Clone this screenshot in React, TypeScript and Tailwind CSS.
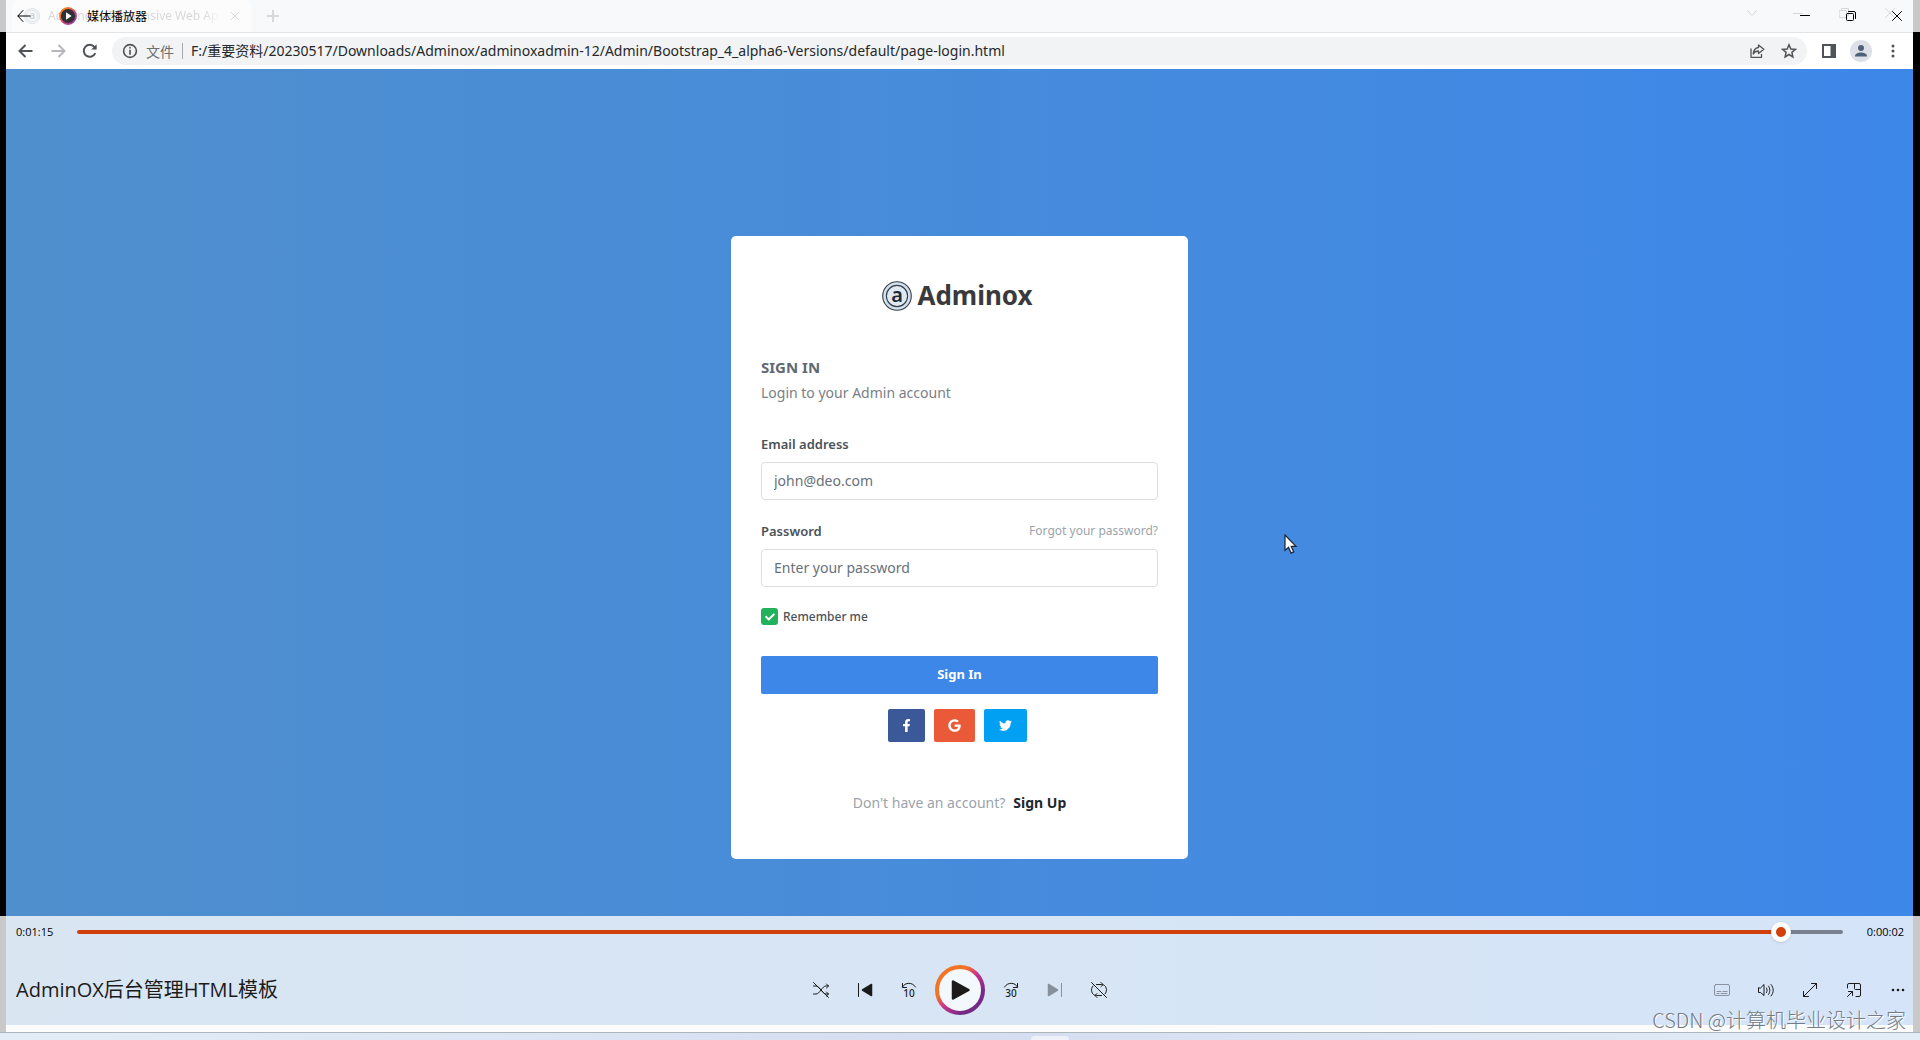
import type { ReactNode } from 'react'
import { FaCheck, FaFacebookF, FaGoogle, FaTwitter } from 'react-icons/fa'

interface IconProps {
  size?: number
  stroke?: number
  className?: string
  children: ReactNode
}

const Icon = ({ size = 16, stroke = 1, className, children }: IconProps) => {
  return (
    <svg
      width={size}
      height={size}
      viewBox={`0 0 ${size} ${size}`}
      fill="none"
      stroke="currentColor"
      strokeWidth={stroke}
      strokeLinecap="round"
      strokeLinejoin="round"
      className={className}
      aria-hidden="true"
    >
      {children}
    </svg>
  )
}

interface IconButtonProps {
  label: string
  className: string
  disabled?: boolean
  children: ReactNode
}

const IconButton = ({ label, className, disabled, children }: IconButtonProps) => {
  return (
    <button
      type="button"
      aria-label={label}
      disabled={disabled}
      className={'flex shrink-0 items-center justify-center ' + className}
    >
      {children}
    </button>
  )
}

const BrandMark = ({ size }: { size: number }) => {
  return (
    <svg width={size} height={size} viewBox="0 0 30 30" aria-hidden="true">
      <circle cx="15" cy="15" r="14.3" fill="#d3dfe9" stroke="#33414d" strokeWidth="1.1" />
      <circle cx="15" cy="15" r="10.6" fill="#dfe9f2" stroke="#33414d" strokeWidth="1.1" />
      <text
        x="15"
        y="20.5"
        textAnchor="middle"
        fontFamily="Noto Sans, sans-serif"
        fontSize="20"
        fontWeight="600"
        fill="#1f2a35"
      >
        a
      </text>
    </svg>
  )
}

const TabStrip = () => {
  return (
    <div className="flex h-8 items-center bg-[#ebf0fa] pl-1.5 text-[#4b4b4b]">
      <div className="flex h-8 w-[239px] items-center rounded-t-lg bg-white pr-2 pl-3">
        <BrandMark size={16} />
        <span className="mr-1.5 ml-2 flex-1 overflow-hidden mask-r-from-90% font-['Noto_Sans',sans-serif] text-xs whitespace-nowrap">
          Adminox - Responsive Web App
        </span>
        <IconButton label="Close tab" className="size-4">
          <Icon size={10}>
            <path d="M1.5 1.5l7 7M8.5 1.5l-7 7" />
          </Icon>
        </IconButton>
      </div>
      <IconButton label="New tab" className="ml-3.5 size-4">
        <Icon size={12} stroke={2}>
          <path d="M6 .5v11M.5 6h11" />
        </Icon>
      </IconButton>
      <div className="mb-1.5 ml-auto flex">
        <IconButton label="Search tabs" className="h-6 w-[46px]">
          <Icon size={10}>
            <path d="M.5 2.5L5 7.5l4.5-5" />
          </Icon>
        </IconButton>
        <IconButton label="Minimize browser" className="h-6 w-[46px]">
          <Icon size={10}>
            <path d="M0 5.5h10" />
          </Icon>
        </IconButton>
        <IconButton label="Restore browser" className="h-6 w-[46px]">
          <Icon size={10}>
            <path d="M.5 2.5h7v7h-7zM2.5 2.5v-2h7v7h-2" />
          </Icon>
        </IconButton>
        <IconButton label="Close browser" className="h-6 w-[46px]">
          <Icon size={10}>
            <path d="M.5.5l9 9M9.5.5l-9 9" />
          </Icon>
        </IconButton>
      </div>
    </div>
  )
}

const AddressBar = () => {
  return (
    <div className="flex h-[37px] items-center border-t border-[#e1e3e6] bg-white px-1 text-[#505357]">
      <IconButton label="Back" className="size-8">
        <Icon stroke={2}>
          <path d="M14.5 8h-13M7.5 2l-6 6 6 6" strokeLinecap="butt" strokeLinejoin="miter" />
        </Icon>
      </IconButton>
      <IconButton label="Forward" className="size-8 text-[#b5b7ba]" disabled>
        <Icon stroke={2}>
          <path d="M1.5 8h13M8.5 2l6 6-6 6" strokeLinecap="butt" strokeLinejoin="miter" />
        </Icon>
      </IconButton>
      <IconButton label="Reload" className="size-8">
        <Icon stroke={2}>
          <path d="M13.3 10.2A6 6 0 1 1 12.4 4L14 5.7" strokeLinecap="butt" />
          <path d="M14.6 1.2v5.4H9.2z" fill="currentColor" stroke="none" />
        </Icon>
      </IconButton>
      <div className="ml-1.5 flex h-7 flex-1 items-center rounded-full bg-[#f1f3f4] px-2.5">
        <Icon stroke={1.6} className="shrink-0">
          <circle cx="8" cy="8" r="6.4" />
          <path d="M8 7.2v4M8 4.6v.4" />
        </Icon>
        <span className="ml-2 shrink-0 border-r border-[#a6a9ad] pr-2 font-['Noto_Sans_CJK_SC',sans-serif] text-sm leading-4 text-[#6b6e72]">
          文件
        </span>
        <input
          type="text"
          aria-label="Address"
          defaultValue="F:/重要资料/20230517/Downloads/Adminox/adminoxadmin-12/Admin/Bootstrap_4_alpha6-Versions/default/page-login.html"
          className="ml-2 min-w-0 flex-1 bg-transparent font-['Noto_Sans','Noto_Sans_CJK_SC',sans-serif] text-sm text-[#26282b] outline-none"
        />
        <IconButton label="Share" className="size-8">
          <Icon stroke={1.3}>
            <path d="M2 6v8.3h10.500v-3" />
            <path d="M9.500 2l5.300 4.300-5.300 4.200V8C6.800 8 5.200 9 4.200 11c.2-3.500 2-6 5.300-6.500z" />
          </Icon>
        </IconButton>
        <IconButton label="Bookmark" className="-mr-2 size-8">
          <Icon stroke={1.5}>
            <path
              d="M8 1.800l1.800 4.200 4.600.4-3.500 3 1 4.500L8 11.500l-3.900 2.400 1-4.500-3.500-3 4.600-.4z"
              strokeLinejoin="miter"
            />
          </Icon>
        </IconButton>
      </div>
      <IconButton label="Side panel" className="ml-1.5 size-8">
        <Icon stroke={2}>
          <path d="M2 2h12v12H2z" strokeLinejoin="miter" />
          <path d="M9.500 2H14v12H9.500z" fill="currentColor" stroke="none" />
        </Icon>
      </IconButton>
      <IconButton label="Profile" className="size-8">
        <span className="flex size-[22px] items-center justify-center rounded-full bg-[#dde1e7] text-[#4f6079]">
          <Icon size={14}>
            <circle cx="7" cy="4" r="3" fill="currentColor" stroke="none" />
            <path d="M1 12.500c0-3 3-4 6-4s6 1 6 4z" fill="currentColor" stroke="none" />
          </Icon>
        </span>
      </IconButton>
      <IconButton label="Menu" className="size-8">
        <Icon>
          <g fill="currentColor" stroke="none">
            <circle cx="8" cy="3" r="1.500" />
            <circle cx="8" cy="8" r="1.500" />
            <circle cx="8" cy="13" r="1.500" />
          </g>
        </Icon>
      </IconButton>
    </div>
  )
}

const inputClass =
  'mt-2 h-[38px] w-full rounded border border-[#dcdee0] px-3 text-sm text-[#565e66] outline-none placeholder:text-[#68717a]'
const labelClass = 'text-[13px] leading-5 font-semibold text-[#4c5258]'

const LoginCard = () => {
  return (
    <section className="w-[457px] rounded-[5px] bg-white px-[30px] pt-[45px] pb-11 font-['Noto_Sans',sans-serif]">
      <h1 className="flex h-[30px] items-center justify-center gap-[5px] pr-1 text-[26px] font-bold text-[#3a3a3c]">
        <BrandMark size={30} />
        Adminox
      </h1>
      <h2 className="mt-11 text-[15px] leading-6 font-bold text-[#5f6973]">SIGN IN</h2>
      <p className="mt-0.5 text-sm leading-6 text-[#7b8085]">Login to your Admin account</p>

      <form onSubmit={(e) => e.preventDefault()}>
        <div className="mt-[29px]">
          <label htmlFor="email" className={'block ' + labelClass}>
            Email address
          </label>
          <input id="email" type="email" placeholder="john@deo.com" className={inputClass} />
        </div>
        <div className="mt-[21px]">
          <div className="flex items-center justify-between">
            <label htmlFor="password" className={labelClass}>
              Password
            </label>
            <a href="#forgot" className="text-xs leading-5 text-[#9ba3ab]">
              Forgot your password?
            </a>
          </div>
          <input
            id="password"
            type="password"
            placeholder="Enter your password"
            className={inputClass}
          />
        </div>
        <div className="mt-5 flex h-5 items-center gap-[5px]">
          <span className="relative flex size-[17px]">
            <input
              id="remember"
              type="checkbox"
              defaultChecked
              className="size-[17px] appearance-none rounded-[3px] bg-[#22b25c]"
            />
            <FaCheck className="pointer-events-none absolute top-1 left-1 size-2.5 text-white" />
          </span>
          <label htmlFor="remember" className="text-xs leading-5 font-medium text-[#4c5258]">
            Remember me
          </label>
        </div>
        <button
          type="submit"
          className="mt-[29px] block h-[38px] w-full rounded-[2px] bg-[#3d87e9] text-[13px] font-bold text-white"
        >
          Sign In
        </button>
      </form>

      <div className="mt-[15px] flex justify-center gap-1 text-sm text-white">
        <button
          type="button"
          aria-label="Facebook"
          className="mr-[5px] flex h-[33px] w-[37px] items-center justify-center rounded-[2px] bg-[#3b5998]"
        >
          <FaFacebookF size={13} />
        </button>
        <button
          type="button"
          aria-label="Google"
          className="mr-[5px] flex h-[33px] w-[41px] items-center justify-center rounded-[2px] bg-[#eb5a38]"
        >
          <FaGoogle size={13} />
        </button>
        <button
          type="button"
          aria-label="Twitter"
          className="mr-[5px] flex h-[33px] w-[43px] items-center justify-center rounded-[2px] bg-[#01a0f3]"
        >
          <FaTwitter size={13} />
        </button>
      </div>

      <p className="mt-[49px] text-center text-sm leading-6 text-[#9ba3ab]">
        Don't have an account?
        <a href="#signup" className="ml-2 font-bold text-[#20272e]">
          Sign Up
        </a>
      </p>
    </section>
  )
}

const PlayerTitleBar = () => {
  return (
    <header className="absolute inset-x-0 top-0 flex h-8 items-center bg-[#fbfbfb]/80 text-black">
      <IconButton label="返回" className="w-12">
        <Icon size={14}>
          <path d="M13 7H1M6 1.500L.8 7 6 12.500" />
        </Icon>
      </IconButton>
      <svg width="18" height="18" viewBox="0 0 18 18" className="ml-[11px]" aria-hidden="true">
        <defs>
          <linearGradient id="appRing" x1="0" y1="0" x2="1" y2="1">
            <stop offset="0.2" stopColor="#f47b20" />
            <stop offset="0.6" stopColor="#d0407a" />
            <stop offset="1" stopColor="#7a3fb0" />
          </linearGradient>
        </defs>
        <circle cx="9" cy="9" r="8" fill="#303036" stroke="url(#appRing)" strokeWidth="1.800" />
        <path d="M7 5.300v7.400L12.600 9z" fill="#fff" />
      </svg>
      <span className="ml-2.5 font-['Noto_Sans_CJK_SC',sans-serif] text-xs">媒体播放器</span>
      <div className="ml-auto flex">
        <IconButton label="最小化" className="h-8 w-[46px]">
          <Icon size={10}>
            <path d="M0 4.500h10" />
          </Icon>
        </IconButton>
        <IconButton label="还原" className="h-8 w-[46px]">
          <Icon size={10}>
            <rect x=".5" y="2.500" width="7" height="7" rx="1" />
            <path d="M2.500.5H8A1.500 1.500 0 0 1 9.500 2v5.500" />
          </Icon>
        </IconButton>
        <IconButton label="关闭" className="h-8 w-[46px]">
          <Icon size={10}>
            <path d="M.5.5l9 9M9.500.5l-9 9" />
          </Icon>
        </IconButton>
      </div>
    </header>
  )
}

const SkipIcon = ({ seconds, back }: { seconds: number; back?: boolean }) => {
  return (
    <Icon size={24}>
      {back ? (
        <path d="M5.500 5.500v4H9.500M5.500 9C8 4 15.500 4 18.500 9" />
      ) : (
        <path d="M18.500 5.500v4H14.500M18.500 9C16 4 8.500 4 5.500 9" />
      )}
      <text
        x="12"
        y="19"
        textAnchor="middle"
        fontFamily="Noto Sans, sans-serif"
        fontSize="10"
        fontWeight="500"
        fill="currentColor"
        stroke="none"
      >
        {seconds}
      </text>
    </Icon>
  )
}

const PlayerControls = () => {
  return (
    <footer className="absolute inset-x-0 bottom-2 h-[116px] bg-[#fbfbfb]/80 font-['Open_Sans','Noto_Sans_CJK_SC',sans-serif] text-[#1b1b1b]">
      <div className="flex h-8 items-center px-4 text-[11px] text-black">
        <span className="w-[61px]">0:01:15</span>
        <input
          type="range"
          aria-label="进度"
          min={0}
          max={1000}
          defaultValue={970}
          className="h-1 min-w-0 flex-1 appearance-none rounded-full bg-linear-to-r from-[#d13f0a] from-[96.5%] to-[#788090] to-[96.5%] [&::-webkit-slider-thumb]:size-5 [&::-webkit-slider-thumb]:appearance-none [&::-webkit-slider-thumb]:rounded-full [&::-webkit-slider-thumb]:border-5 [&::-webkit-slider-thumb]:border-white [&::-webkit-slider-thumb]:bg-[#d13f0a] [&::-webkit-slider-thumb]:shadow"
        />
        <span className="w-[61px] text-right">0:00:02</span>
      </div>

      <div className="mt-[15px] grid grid-cols-[1fr_auto_1fr] items-center">
        <h2 className="pl-4 text-xl leading-7">AdminOX后台管理HTML模板</h2>
        <div className="flex items-center gap-1">
          <IconButton label="随机播放" className="size-10">
            <Icon>
              <path d="M.5 4H3c2 0 3.500 2 5 4s3 4 5 4h2.500M.5 12H3c2 0 3.500-2 5-4s3-4 5-4h2.500" />
              <path d="M13.500 2l2 2-2 2M13.500 10l2 2-2 2M.5.5l15 15" />
            </Icon>
          </IconButton>
          <IconButton label="上一个" className="size-10">
            <Icon>
              <path d="M1.500 1.500v13" />
              <path d="M14.500 2.500v11L5.500 8z" fill="currentColor" stroke="currentColor" strokeWidth="1.500" />
            </Icon>
          </IconButton>
          <IconButton label="后退 10 秒" className="size-10">
            <SkipIcon seconds={10} back />
          </IconButton>
          <IconButton label="播放" className="h-[54px] w-[54px]">
            <svg width="50" height="50" viewBox="0 0 50 50" aria-hidden="true">
              <defs>
                <linearGradient id="playRing" x1="0.15" y1="0.15" x2="0.85" y2="0.85">
                  <stop offset="0.25" stopColor="#f27427" />
                  <stop offset="0.5" stopColor="#c9338a" />
                  <stop offset="0.9" stopColor="#722a85" />
                </linearGradient>
              </defs>
              <circle cx="25" cy="25" r="23" fill="#f3f8fd" stroke="url(#playRing)" strokeWidth="4" />
              <path
                d="M18 16.500v17L33.500 25z"
                fill="#1b1b1b"
                stroke="#1b1b1b"
                strokeWidth="2.500"
                strokeLinejoin="round"
              />
            </svg>
          </IconButton>
          <IconButton label="前进 30 秒" className="size-10">
            <SkipIcon seconds={30} />
          </IconButton>
          <IconButton label="下一个" className="size-10 text-[#87909b]" disabled>
            <Icon>
              <path d="M14.500 1.500v13" />
              <path d="M1.500 2.500v11l9-5.500z" fill="currentColor" stroke="currentColor" strokeWidth="1.500" />
            </Icon>
          </IconButton>
          <IconButton label="重复" className="size-10">
            <Icon>
              <path d="M5.500 2.500h5c5 0 6.500 6.500 3.500 9.500M10.500 13.500h-5C.5 13.500-1 7 2 4" />
              <path d="M10 .5l2 2-2 2M6 11.500l-2 2 2 2M.5.5l15 15" />
            </Icon>
          </IconButton>
        </div>
        <div className="flex items-center justify-end gap-1 pr-0.5">
          <IconButton label="字幕" className="size-10 text-[#8892a0]" disabled>
            <Icon>
              <rect x=".5" y="2.500" width="15" height="11" rx="1.500" />
              <path d="M3 9.500h4M9 9.500h4M3 11.500h2M7 11.500h6" />
            </Icon>
          </IconButton>
          <IconButton label="音量" className="size-10">
            <Icon>
              <path d="M.5 6v4.500h2l3.500 3v-11L2.500 6z" />
              <path d="M8.500 6c.8 1.300.8 3 0 4.500M10.500 4c1.800 2.500 1.800 6 0 8.500M13 2.500c3 3.500 3 8 0 11.500" />
            </Icon>
          </IconButton>
          <IconButton label="全屏" className="size-10">
            <Icon>
              <path d="M1.500 14.500l13-13M9.500 1.500h5v5M1.500 9.500v5h5" />
            </Icon>
          </IconButton>
          <IconButton label="迷你播放器" className="size-10">
            <Icon>
              <path d="M1.500 6V3A1.500 1.500 0 0 1 3 1.500h10A1.500 1.500 0 0 1 14.500 3v10a1.500 1.500 0 0 1-1.500 1.500h-3" />
              <path d="M8.500 1.500v5a1 1 0 0 0 1 1h5M1.500 14.500l5-5M2.500 9.500h4v4" />
            </Icon>
          </IconButton>
          <IconButton label="更多选项" className="size-10">
            <Icon>
              <g fill="currentColor" stroke="none">
                <circle cx="3" cy="8" r="1.300" />
                <circle cx="8" cy="8" r="1.300" />
                <circle cx="13" cy="8" r="1.300" />
              </g>
            </Icon>
          </IconButton>
        </div>
      </div>
    </footer>
  )
}

const App = () => {
  return (
    <div className="relative flex min-h-screen flex-col overflow-hidden bg-black">
      <div className="mr-[7px] ml-1.5 flex flex-1 flex-col">
        <TabStrip />
        <AddressBar />
        <main className="relative flex flex-1 items-center justify-center bg-linear-to-r from-[#508fcd] to-[#3d87e9]">
          <LoginCard />
          <svg
            width="14"
            height="22"
            viewBox="0 0 14 22"
            className="absolute top-[48.6%] left-[67%]"
            aria-hidden="true"
          >
            <path
              d="M1 1v15.500l3.500-3.200 2.600 5.800 2.600-1.200-2.500-5.600H12z"
              fill="#fff"
              stroke="#1c2430"
              strokeWidth="1.200"
            />
          </svg>
        </main>
        <div className="h-[7px] bg-white" />
      </div>
      <div className="flex h-2 items-end justify-center border-t border-[#adb5be] bg-linear-to-r from-[#e2edf7] via-[#d5def0] to-[#e2edf7]">
        <div className="ml-[180px] h-1 w-[38px] rounded-t bg-[#eef1f9]" />
      </div>

      <PlayerTitleBar />
      <PlayerControls />
      <p className="pointer-events-none absolute right-[14px] bottom-1.5 font-['Noto_Sans_CJK_SC',sans-serif] text-xl leading-7 font-light text-[#737b86] [text-shadow:1px_1px_0_#ffffff]">
        CSDN @计算机毕业设计之家
      </p>
    </div>
  )
}

export default App
